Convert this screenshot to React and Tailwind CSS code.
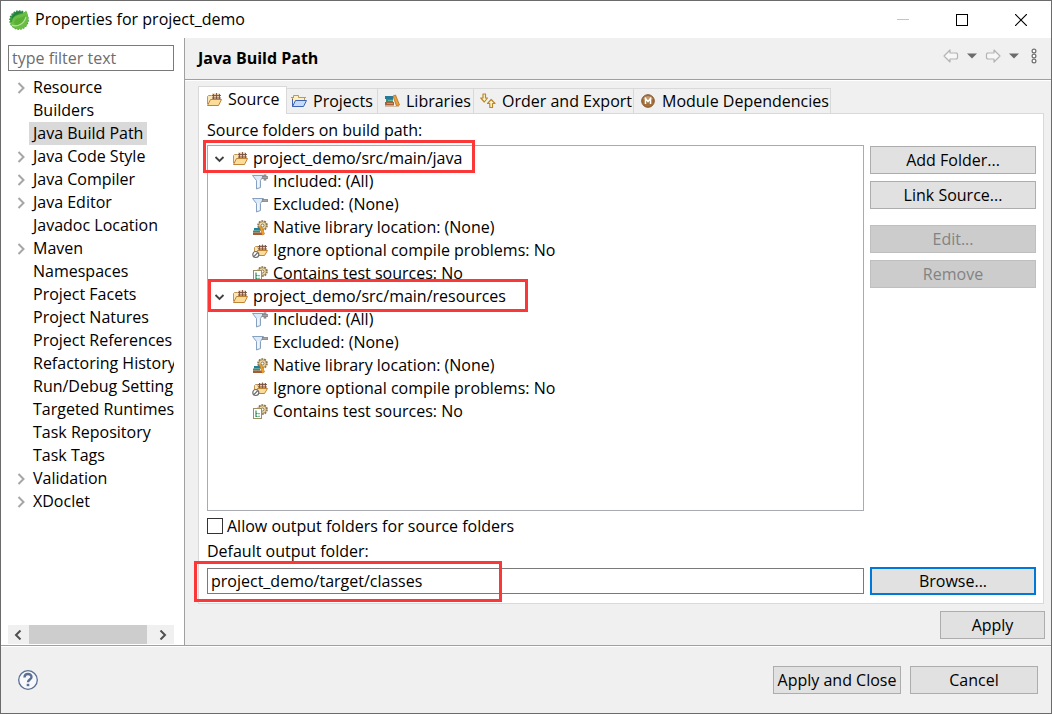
import React, { useState } from 'react';

const NAV_ITEMS = [
  { label: 'Resource', expandable: true },
  { label: 'Builders' },
  { label: 'Java Build Path' },
  { label: 'Java Code Style', expandable: true },
  { label: 'Java Compiler', expandable: true },
  { label: 'Java Editor', expandable: true },
  { label: 'Javadoc Location' },
  { label: 'Maven', expandable: true },
  { label: 'Namespaces' },
  { label: 'Project Facets' },
  { label: 'Project Natures' },
  { label: 'Project References' },
  { label: 'Refactoring History' },
  { label: 'Run/Debug Setting' },
  { label: 'Targeted Runtimes' },
  { label: 'Task Repository' },
  { label: 'Task Tags' },
  { label: 'Validation', expandable: true },
  { label: 'XDoclet', expandable: true },
];

/* ---------- ICONS ---------- */

const SpringIcon = () => (
  <svg width="20" height="20" viewBox="0 0 20 20">
    <circle cx="10" cy="10" r="9" fill="#3d9b35" />
    <circle cx="10" cy="10" r="9" fill="none" stroke="#2f8a48" strokeWidth="1.6" strokeDasharray="1.6 1.2" />
    <path d="M1 12 Q2 18 9 19.500 Q17 19.500 19.500 11 Q19.500 4 17 0.500 Q15 4 9 5 Q3 7 3 12 Z" fill="#6cbd45" />
    <path d="M16.500 5 C14 8 10 7 7 9 C4.500 11 5 14 7 15 C11 16 16 12 16.500 5Z" fill="#58b035" />
    <path d="M3 15 C8 17.500 15 14 17 7" fill="none" stroke="#b7e09b" strokeWidth="1.100" />
    <path d="M3 7 C5 2 10 .5 14 2 C10 4 6 4 3 9Z" fill="#22803f" />
  </svg>
);

const ChevronRight = () => (
  <svg width="9" height="12" viewBox="0 0 9 12" fill="none" stroke="#a6a6a6" strokeWidth="2">
    <path d="M1.500 1 L6.500 6 L1.500 11" />
  </svg>
);

const ChevronDown = () => (
  <svg width="11" height="12" viewBox="0 0 11 12" fill="none" stroke="#404040" strokeWidth="1.800">
    <path d="M1.500 4 L5.500 8 L9.500 4" />
  </svg>
);

const PackageFolderIcon = () => (
  <svg width="16" height="16" viewBox="0 0 16 16">
    <path d="M1.500 12 V4.500 L2.500 3.500 H5.500 L6.500 4.500 H13.500 V8" fill="#f9e6b8" stroke="#c29551" />
    <rect x="6" y="1.500" width="8" height="5.500" fill="#e9c7a2" />
    <path d="M7.500 2 V7 M10.500 1 V7 M13.500 2 V7 M6 3.500 H15 M6 6 H15" stroke="#7a5140" strokeWidth=".9" />
    <path d="M1.500 13.500 L4.500 7.500 H15.500 L12.500 13.500 Z" fill="#fbdc98" stroke="#c08439" strokeLinejoin="round" />
  </svg>
);

const ProjectsIcon = () => (
  <svg width="16" height="16" viewBox="0 0 16 16">
    <path d="M1.500 13 V4.500 H2.500 V2.500 H7.500 V4.500 H13.500 V8" fill="#fdf0c0" stroke="#b99a58" />
    <path d="M0 4.500 H3 M13 4.500 H15" stroke="#b99a58" />
    <path d="M1.500 13.500 L4.500 7.500 H15.500 L12.500 13.500 Z" fill="#c4dcf8" stroke="#3f62b5" strokeLinejoin="round" />
    <path d="M1.500 13.500 V6" stroke="#3f62b5" />
  </svg>
);

const LibrariesIcon = () => (
  <svg width="16" height="16" viewBox="0 0 16 16">
    <rect x="1" y="3" width="8" height="3" fill="#27799a" />
    <rect x="2" y="6" width="7" height="3" fill="#2f9470" />
    <rect x="4" y="7" width="5" height="1" fill="#64b89b" />
    <rect x="1" y="9" width="9" height="3.500" fill="#a9613a" />
    <rect x="3" y="10" width="6" height="1" fill="#cf9468" />
    <path d="M9 3 L11.500 2 L15.500 12 L12.500 13 Z" fill="#e8a13c" stroke="#b86e1d" strokeWidth=".8" />
    <path d="M1 13.500 H15" stroke="#c9b39a" strokeWidth=".8" />
  </svg>
);

const OrderIcon = () => (
  <svg width="16" height="16" viewBox="0 0 16 16" fill="#fff3cd" stroke="#b8892c" strokeWidth="1.200" strokeLinejoin="round">
    <path d="M3 1 H5.500 V5 H7.500 L4.300 9 L.8 5 H3 Z" />
    <path d="M9.800 14.500 H12.500 V10.500 H15 L11.200 6.500 L7.500 10.500 H9.800 Z" />
  </svg>
);

const ModuleIcon = () => (
  <svg width="14" height="14" viewBox="0 0 14 14">
    <circle cx="7" cy="7" r="6.300" fill="#a4703c" stroke="#835427" />
    <path d="M2 5 Q7 -1 12 5 Q7 7 2 5" fill="#c49b70" />
    <path d="M4.500 10 V4.500 L7 7.500 L9.500 4.500 V10" fill="none" stroke="#fff" strokeWidth="1.500" />
  </svg>
);

const FilterIcon = ({ exclude }) => (
  <svg width="16" height="16" viewBox="0 0 16 16">
    <path d="M.5 1.500 H11.500 L8.500 6.500 V13.500 L4.500 15 V6.500 Z" fill="#dceafa" stroke="#87a0c0" strokeLinejoin="round" />
    <path d="M6 6 V13" stroke="#fff" />
    <path d="M10 3.500 H16" stroke="#777" strokeWidth="2.600" />
    <path d="M10.500 3.500 H15.500" stroke="#a5a5a5" />
    {!exclude && (
      <>
        <path d="M13 .5 V6.500" stroke="#777" strokeWidth="2.600" />
        <path d="M13 1 V6 M10.500 3.500 H15.500" stroke="#a5a5a5" />
      </>
    )}
  </svg>
);

const Gear = () => (
  <>
    <circle cx="10.500" cy="5.500" r="4.500" fill="#ecd59a" stroke="#83704c" strokeWidth="1.600" strokeDasharray="1.800 1" />
    <circle cx="10.500" cy="5.500" r="3.600" fill="#f1dfad" stroke="#a28a59" strokeWidth=".7" />
    <circle cx="10.500" cy="5.500" r="1.500" fill="#fff" stroke="#83704c" />
  </>
);

const NativeLibIcon = () => (
  <svg width="16" height="16" viewBox="0 0 16 16">
    <Gear />
    <rect x="2" y="8" width="7" height="2.500" fill="#257f9d" />
    <rect x="1" y="10.500" width="7" height="2" fill="#2c9474" />
    <rect x="1" y="12.500" width="9" height="2.500" fill="#aa5a30" />
    <path d="M7.500 7 L9.500 6.500 L12.500 14 L10.500 15 Z" fill="#f0a22c" stroke="#cc7b16" strokeWidth=".7" />
  </svg>
);

const IgnoreIcon = () => (
  <svg width="16" height="16" viewBox="0 0 16 16">
    <path d="M2.500 11 V4.500 L3.500 3.500 H6 V5.500 H13.500 V9" fill="#f9e6b8" stroke="#c29551" />
    <rect x="7" y="2" width="7" height="5" fill="#e9c7a2" />
    <path d="M7.500 2 V7 M10.500 1.500 V7 M13.500 2 V7 M6 3.500 H15 M6 6 H15" stroke="#7a5140" strokeWidth=".9" />
    <path d="M3 12 L5.500 7.500 H15.500 L12.500 12.500 H3 Z" fill="#fbdc98" stroke="#c08439" strokeLinejoin="round" />
    <circle cx="3.800" cy="11.500" r="3" fill="#fff" stroke="#6b6b6b" strokeWidth="1.200" />
    <path d="M2 13.500 L5.800 9.500" stroke="#6b6b6b" strokeWidth="1.200" />
  </svg>
);

const TestSourcesIcon = () => (
  <svg width="16" height="16" viewBox="0 0 16 16">
    <Gear />
    <rect x="1.500" y="4.500" width="8" height="10" fill="#fff" stroke="#a08e5e" />
    <path d="M4 6.500 V12.500 H5.500 M4 9.500 H5.500" fill="none" stroke="#2f8f5b" strokeWidth="1.200" />
    <path d="M7 9 V10.300 M7 11.700 V13" stroke="#2f8f5b" strokeWidth="1.200" />
  </svg>
);

const ArrowIcon = ({ forward }) => (
  <svg width="16" height="14" viewBox="0 0 16 14" className={forward ? 'rotate-180' : ''}>
    <path d="M1 7 L7 1 V4 H13.500 L14.500 5 V9 L13.500 10 H7 V13 Z" fill="#f7f7f7" stroke="#b4b4b4" strokeWidth="1.200" strokeLinejoin="round" />
  </svg>
);

const DropIcon = () => (
  <svg width="10" height="6" viewBox="0 0 10 6">
    <path d="M0 .5 H10 L5 5.500 Z" fill="#6b6b6b" />
  </svg>
);

const MoreIcon = () => (
  <svg width="6" height="16" viewBox="0 0 6 16" fill="#fff" stroke="#707070" strokeWidth="1.200">
    <circle cx="3" cy="3" r="1.900" />
    <circle cx="3" cy="8" r="1.900" />
    <circle cx="3" cy="13" r="1.900" />
  </svg>
);

const HelpIcon = () => (
  <svg width="22" height="22" viewBox="0 0 22 22" fill="none" stroke="#5b6f92">
    <circle cx="11" cy="11" r="9.300" fill="#f6f8fb" strokeWidth="1.300" />
    <path d="M7.500 8.500 C7.500 4 14.500 4 14.500 8 C14.500 10.500 11 10.500 11 13.200" strokeWidth="2.400" />
    <path d="M11 14.800 V17.200" strokeWidth="2.600" />
  </svg>
);

/* ---------- DATA ---------- */

const TABS = [
  { label: 'Source', icon: PackageFolderIcon, box: 'w-[89px] pl-[7px] gap-1.5' },
  { label: 'Projects', icon: ProjectsIcon, box: 'w-[91px] pl-1 gap-1.5' },
  { label: 'Libraries', icon: LibrariesIcon, box: 'w-[96px] pl-1.5 gap-1.5' },
  { label: 'Order and Export', icon: OrderIcon, box: 'w-[160px] pl-1.5 gap-1.5' },
  { label: 'Module Dependencies', icon: ModuleIcon, box: 'w-[197px] pl-[7px] gap-[7px]' },
];

const DETAILS = [
  { label: 'Included: (All)', icon: <FilterIcon /> },
  { label: 'Excluded: (None)', icon: <FilterIcon exclude /> },
  { label: 'Native library location: (None)', icon: <NativeLibIcon /> },
  { label: 'Ignore optional compile problems: No', icon: <IgnoreIcon /> },
  { label: 'Contains test sources: No', icon: <TestSourcesIcon /> },
];

const BUTTON = 'h-7 border text-center leading-6 whitespace-nowrap';
const NORMAL = 'border-[#adadad] bg-[#e1e1e1]';

const SourceFolder = ({ path, markBox }) => (
  <li>
    <div className="relative flex items-center h-[23px] pl-1.5">
      <ChevronDown />
      <span className="ml-[7px] mr-[5px]"><PackageFolderIcon /></span>
      {path}
      <span className={`absolute h-[33px] border-[3px] border-[#fb3838] pointer-events-none z-10 ${markBox}`} />
    </div>
    <ul>
      {DETAILS.map((d) => (
        <li key={d.label} className="flex items-center gap-[5px] h-[23px] pl-11">
          {d.icon}
          {d.label}
        </li>
      ))}
    </ul>
  </li>
);

const App = () => {
  const [filter, setFilter] = useState('');
  const [output, setOutput] = useState('project_demo/target/classes');
  const [allow, setAllow] = useState(false);
  const [tab, setTab] = useState('Source');
  const [page, setPage] = useState('Java Build Path');

  return (
    <div className="min-h-screen flex flex-col border border-[#6b6b6b] bg-[#f0f0f0] text-black text-[16px] leading-[23px] font-['Open_Sans','Noto_Sans',sans-serif]">

      {/* TITLE BAR */}
      <header className="flex items-center h-[37px] bg-white pl-2 pr-6">
        <SpringIcon />
        <h1 className="ml-1.5 flex-1">Properties for project_demo</h1>
        <div className="flex items-center gap-[47px]">
          <button type="button" aria-label="Minimize" disabled>
            <svg width="12" height="12" viewBox="0 0 12 12"><path d="M0 5.500 H12" stroke="#c4c4c4" /></svg>
          </button>
          <button type="button" aria-label="Maximize">
            <svg width="12" height="12" viewBox="0 0 12 12"><rect x=".5" y=".5" width="11" height="11" fill="none" stroke="#000" /></svg>
          </button>
          <button type="button" aria-label="Close">
            <svg width="12" height="12" viewBox="0 0 12 12"><path d="M0 0 L12 12 M12 0 L0 12" stroke="#000" strokeWidth="1.200" /></svg>
          </button>
        </div>
      </header>

      <div className="flex flex-1">

        {/* PAGE LIST */}
        <aside className="flex flex-col w-[184px] shrink-0 bg-white border-r border-[#a0a0a0] pl-[7px] pr-2.5 pt-[7px]">
          <input
            type="text"
            aria-label="Filter"
            placeholder="type filter text"
            value={filter}
            onChange={(e) => setFilter(e.target.value)}
            className="h-[26px] w-full border border-[#7a7a7a] px-[3px] outline-none placeholder:text-[#6d6d6d]"
          />
          <ul className="mt-[5px] flex-1 overflow-hidden">
            {NAV_ITEMS.map((item) => (
              <li key={item.label} className="flex items-center h-[23px]">
                <span className="w-[21px] pl-[9px] shrink-0">{item.expandable && <ChevronRight />}</span>
                <button
                  type="button"
                  onClick={() => setPage(item.label)}
                  className={`h-[23px] px-1 whitespace-nowrap ${page === item.label ? 'bg-[#d9d9d9]' : ''}`}
                >
                  {item.label}
                </button>
              </li>
            ))}
          </ul>
          <div className="flex items-center h-[19px] mb-px bg-[#f0f0f0]">
            <button type="button" aria-label="Scroll left" className="w-[21px] pl-1.5">
              <svg width="8" height="10" viewBox="0 0 8 10"><path d="M6.500 .5 L2 5 L6.500 9.500" fill="none" stroke="#505050" strokeWidth="2" /></svg>
            </button>
            <div className="flex-1 mr-1.5 h-full bg-[#cdcdcd]" />
            <button type="button" aria-label="Scroll right" className="w-[21px] pl-1.5">
              <svg width="8" height="10" viewBox="0 0 8 10"><path d="M1.500 .5 L6 5 L1.500 9.500" fill="none" stroke="#505050" strokeWidth="2" /></svg>
            </button>
          </div>
        </aside>

        {/* PAGE CONTENT */}
        <main className="flex flex-col flex-1 min-w-0">
          <div className="flex items-center h-[42px] pl-[13px] pr-3.5 border-b border-[#a0a0a0]">
            <h2 className="flex-1 font-bold">Java Build Path</h2>
            <div className="flex items-center gap-2 pb-1.5">
              <button type="button" aria-label="Back"><ArrowIcon /></button>
              <button type="button" aria-label="Back history"><DropIcon /></button>
              <button type="button" aria-label="Forward"><ArrowIcon forward /></button>
              <button type="button" aria-label="Forward history"><DropIcon /></button>
              <button type="button" aria-label="View menu" className="ml-1"><MoreIcon /></button>
            </div>
          </div>

          <div className="flex flex-col flex-1 border-t border-white pl-[13px] pt-[5px] pb-1.5">
            <div role="tablist" className="flex items-end h-[27px]">
              {TABS.map((t) => (
                <button
                  key={t.label}
                  type="button"
                  role="tab"
                  aria-selected={tab === t.label}
                  onClick={() => setTab(t.label)}
                  className={`flex items-center whitespace-nowrap border-[#d9d9d9] border-t border-r ${t.box} ${tab === t.label ? 'h-7 -mb-px pb-0.5 z-10 bg-white border-l' : 'h-[25px]'}`}
                >
                  <t.icon />
                  {t.label}
                </button>
              ))}
            </div>

            <section className="flex flex-col flex-1 mr-[7px] border border-[#d9d9d9] bg-white pl-2 pr-[7px] pt-[5px] pb-2">
              <p className="mb-[3px]">Source folders on build path:</p>
              <div className="flex flex-1 gap-1.5">
                <ul className="flex-1 border border-[#a8abb0] pt-px">
                  <SourceFolder path="project_demo/src/main/java" markBox="-left-[5px] -top-[7px] w-[272px]" />
                  <SourceFolder path="project_demo/src/main/resources" markBox="left-0 -top-[6px] w-[320px]" />
                </ul>
                <div className="flex flex-col w-[166px] pt-px gap-[7px]">
                  <button type="button" className={`${BUTTON} ${NORMAL}`}>Add Folder...</button>
                  <button type="button" className={`${BUTTON} ${NORMAL}`}>Link Source...</button>
                  <button type="button" disabled className={`${BUTTON} mt-[9px] border-[#bfbfbf] bg-[#cccccc] text-[#838383]`}>Edit...</button>
                  <button type="button" disabled className={`${BUTTON} border-[#bfbfbf] bg-[#cccccc] text-[#838383]`}>Remove</button>
                </div>
              </div>

              <label className="flex items-center gap-1 h-6 mt-[3px]">
                <input
                  type="checkbox"
                  checked={allow}
                  onChange={(e) => setAllow(e.target.checked)}
                  className="appearance-none size-4 border border-[#333] bg-white checked:bg-[#333]"
                />
                Allow output folders for source folders
              </label>
              <label htmlFor="output" className="h-6 mt-px leading-6">Default output folder:</label>
              <div className="relative flex items-center gap-1.5 mt-1">
                <input
                  id="output"
                  type="text"
                  value={output}
                  onChange={(e) => setOutput(e.target.value)}
                  className="flex-1 h-[26px] border border-[#7a7a7a] px-[3px] outline-none"
                />
                <button type="button" className="w-[166px] h-7 border-2 border-[#0078d7] bg-[#e1e1e1] leading-6">Browse...</button>
                <span className="absolute -left-[13px] -top-[6px] w-[308px] h-[41px] border-[3px] border-[#fb3838] pointer-events-none" />
              </div>
            </section>

            <div className="flex justify-end mt-[7px] pr-[6px]">
              <button type="button" className={`${BUTTON} ${NORMAL} w-[105px]`}>Apply</button>
            </div>
          </div>
        </main>
      </div>

      {/* FOOTER */}
      <footer className="border-t border-[#a0a0a0]">
        <div className="flex items-center gap-[9px] border-t border-white pl-4 pr-[13px] pt-[19px] pb-[19px]">
          <button type="button" aria-label="Help" className="mr-auto"><HelpIcon /></button>
          <button type="button" className={`${BUTTON} ${NORMAL} w-32`}>Apply and Close</button>
          <button type="button" className={`${BUTTON} ${NORMAL} w-32`}>Cancel</button>
        </div>
      </footer>
    </div>
  );
};

export default App;
